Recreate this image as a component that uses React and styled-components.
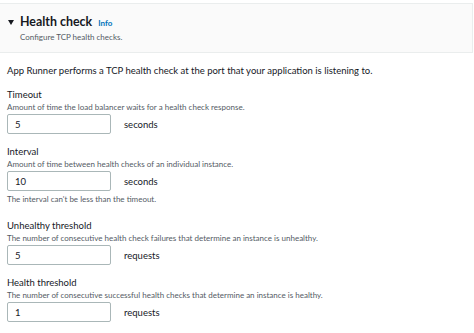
import React from "react";
import styled, { createGlobalStyle } from "styled-components";

const Global = createGlobalStyle`
  html, body { margin: 0; padding: 0; background: #ffffff; }
  body { font-family: Lato, "Open Sans", sans-serif; color: #16191f; }
`;

const Page = styled.div`
  width: 474px;
  height: 333px;
  overflow: hidden;
  padding-top: 3px;
  box-sizing: border-box;
`;

const Header = styled.div`
  height: 50px;
  box-sizing: border-box;
  background: #fafafa;
  border-top: 1px solid #eaeded;
  border-bottom: 1px solid #eaeded;
  border-right: 1px solid #eaeded;
  width: 473px;
  padding: 10px 0 0 8px;
`;

const TitleRow = styled.div`
  display: flex;
  align-items: center;
  height: 16px;
`;

const Caret = styled.svg`
  width: 6px;
  height: 5px;
  margin-right: 6px;
`;

const Title = styled.span`
  font-size: 12.4px;
  font-weight: 700;
  line-height: 16px;
`;

const Info = styled.a`
  font-size: 8px;
  font-weight: 700;
  color: #0073bb;
  margin-left: 6px;
  margin-top: 2px;
  text-decoration: none;
`;

const Subtitle = styled.div`
  font-size: 8px;
  color: #545b64;
  margin: 2px 0 0 12px;
  line-height: 11px;
`;

const Body = styled.div`
  padding: 11px 7px 0 7px;
  display: flex;
  flex-direction: column;
`;

const Intro = styled.p`
  margin: 0 0 12px 0;
  font-size: 9.5px;
  line-height: 13px;
`;

const Field = styled.div`
  display: flex;
  flex-direction: column;
  margin-bottom: ${(p) => (p.$tight ? "15px" : "12px")};
`;

const Label = styled.div`
  font-size: 9.5px;
  line-height: 12px;
`;

const Desc = styled.div`
  font-size: 8px;
  line-height: 11px;
  color: #545b64;
  margin: 1px 0 1px 0;
`;

const Constraint = styled.div`
  font-size: 8px;
  line-height: 11px;
  color: #545b64;
  margin-top: 3px;
`;

const InputRow = styled.div`
  display: flex;
  align-items: center;
  gap: 13px;
`;

const Input = styled.div`
  width: 104px;
  height: 20px;
  box-sizing: border-box;
  border: 1px solid #aab7b8;
  border-radius: 2px;
  background: #fff;
  font-size: 9.5px;
  padding-left: 7px;
  display: flex;
  align-items: center;
`;

const Unit = styled.span`
  font-size: 9.5px;
`;

const fields = [
  { label: "Timeout", desc: "Amount of time the load balancer waits for a health check response.", value: "5", unit: "seconds" },
  { label: "Interval", desc: "Amount of time between health checks of an individual instance.", value: "10", unit: "seconds", constraint: "The interval can't be less than the timeout." },
  { label: "Unhealthy threshold", desc: "The number of consecutive health check failures that determine an instance is unhealthy.", value: "5", unit: "requests" },
  { label: "Health threshold", desc: "The number of consecutive successful health checks that determine an instance is healthy.", value: "1", unit: "requests" },
];

export default function App() {
  return (
    <Page>
      <Global />
      <Header>
        <TitleRow>
          <Caret viewBox="0 0 6 5"><path d="M0 0 H6 L3 5 Z" fill="#16191f" /></Caret>
          <Title>Health check</Title>
          <Info href="#">Info</Info>
        </TitleRow>
        <Subtitle>Configure TCP health checks.</Subtitle>
      </Header>
      <Body>
        <Intro>App Runner performs a TCP health check at the port that your application is listening to.</Intro>
        {fields.map((f) => (
          <Field key={f.label} $tight={!!f.constraint}>
            <Label>{f.label}</Label>
            <Desc>{f.desc}</Desc>
            <InputRow>
              <Input>{f.value}</Input>
              <Unit>{f.unit}</Unit>
            </InputRow>
            {f.constraint && <Constraint>{f.constraint}</Constraint>}
          </Field>
        ))}
      </Body>
    </Page>
  );
}
